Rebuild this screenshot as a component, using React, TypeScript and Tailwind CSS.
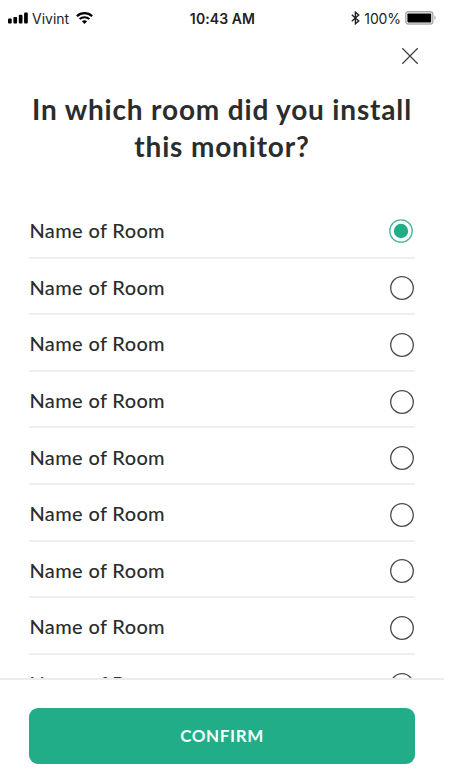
import React, { useState } from 'react';

const rooms = Array.from({ length: 9 }, (_, i) => ({ id: i, name: 'Name of Room' }));

function StatusBar() {
  return (
    <div className="h-[37px] flex-shrink-0 grid grid-cols-3 items-center pl-2 pr-[7px] font-['Inter',sans-serif] text-[14px] text-[#222]">
      <div className="flex items-center">
        <svg className="-mt-px" width="20" height="12" viewBox="0 0 20 12" fill="#000">
          <rect x="0" y="6.5" width="3.7" height="5" rx="1" />
          <rect x="5.4" y="5" width="3.7" height="6.5" rx="1" />
          <rect x="10.8" y="2.8" width="3.7" height="8.7" rx="1" />
          <rect x="16.1" y="0.4" width="3.7" height="11.1" rx="1" />
        </svg>
        <span className="ml-1 -mt-px text-[14px]">Vivint</span>
        <svg className="ml-[7px] -mt-px" width="17" height="12" viewBox="0 0 17 12">
          <path d="M0.9 4.2C5.2 0.2 11.8 0.2 16.1 4.2" fill="none" stroke="#000" strokeWidth="2.2" />
          <path d="M3.6 7.1C6.4 4.6 10.6 4.6 13.4 7.1" fill="none" stroke="#000" strokeWidth="2" />
          <path d="M5.9 9.3C7.4 8 9.6 8 11.1 9.3L8.5 11.9Z" fill="#000" />
        </svg>
      </div>
      <div className="text-center font-semibold whitespace-nowrap -mt-px tracking-[0.1px]">10:43 AM</div>
      <div className="flex items-center justify-end">
        <svg className="-mt-px" width="9" height="14" viewBox="0 0 9 14" fill="none" stroke="#222" strokeWidth="1.4">
          <path d="M0.8 3.8L7.7 10L4.4 12.8V1.2L7.7 4L0.8 10.2" />
        </svg>
        <span className="ml-1 -mt-px tracking-[-0.1px]">100%</span>
        <svg className="ml-1 -mt-px" width="32" height="14" viewBox="0 0 32 14">
          <rect x="0.8" y="0.8" width="27" height="12.2" rx="2.5" fill="#fff" stroke="#aaa" strokeWidth="1.4" />
          <rect x="2.4" y="2.4" width="23.8" height="9" rx="0.8" fill="#000" />
          <path d="M29.4 4.8C31.2 5.6 31.2 8.2 29.4 9Z" fill="#aaa" />
        </svg>
      </div>
    </div>
  );
}

function Radio({ checked }: { checked: boolean }) {
  if (checked) {
    return (
      <svg className="mr-[2px] mt-[3px]" width="24" height="24" viewBox="0 0 24 24">
        <circle cx="12" cy="12" r="11.2" fill="none" stroke="#45b998" strokeWidth="1.3" />
        <circle cx="12" cy="12" r="7.2" fill="#22ad89" />
      </svg>
    );
  }
  return (
    <svg className="mr-px mt-[5px]" width="24" height="24" viewBox="0 0 24 24">
      <circle cx="12" cy="12" r="11.3" fill="none" stroke="#4a4a4a" strokeWidth="1.3" />
    </svg>
  );
}

export default function App() {
  const [selected, setSelected] = useState(0);

  return (
    <div className="w-full h-[775px] bg-white overflow-hidden font-['Lato',sans-serif] text-[#2b2d2d]">
      <div className="w-[444px] h-full flex flex-col">
        <StatusBar />
        <div className="h-[54px] flex-shrink-0 flex justify-end pr-[25px] pt-[10px]">
          <button className="w-[18px] h-[18px]" aria-label="Close">
            <svg width="18" height="18" viewBox="0 0 18 18" stroke="#444" strokeWidth="1.3">
              <path d="M1.3 1.3L16.7 16.7M16.7 1.3L1.3 16.7" />
            </svg>
          </button>
        </div>
        <h1 className="flex-shrink-0 text-center text-[28px] leading-[37px] font-bold tracking-[0.83px] whitespace-nowrap">
          In which room did you install
          <br />
          this monitor?
        </h1>
        <div className="flex-1 min-h-0 overflow-hidden mt-[37px] px-[29px]">
          {rooms.map(room => (
            <button
              key={room.id}
              onClick={() => setSelected(room.id)}
              className="w-full h-[56.6px] flex items-center justify-between border-b-2 border-[#efefef] text-left"
            >
              <span className="text-[20px] leading-6 font-medium tracking-[0.35px] ml-[0.5px] mt-[2px]">{room.name}</span>
              <Radio checked={selected === room.id} />
            </button>
          ))}
        </div>
        <div className="h-[97px] flex-shrink-0 border-t-2 border-[#ececec] px-[29px] pt-[28px]">
          <button className="w-full h-[56px] rounded-[9px] bg-[#22ad89] text-[#f0fffa] text-[17px] font-bold tracking-[0.6px]">
            CONFIRM
          </button>
        </div>
      </div>
    </div>
  );
}
